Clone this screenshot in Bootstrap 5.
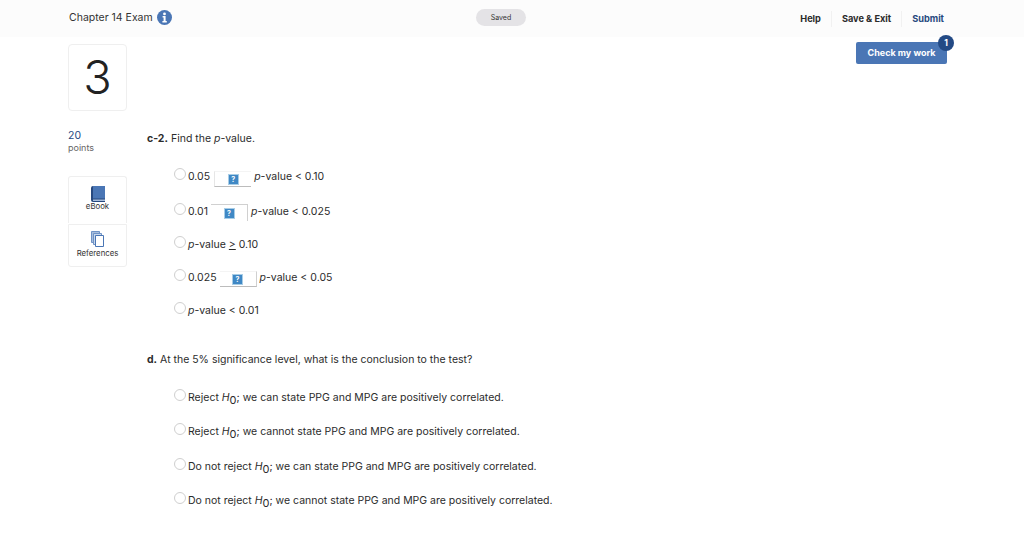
<!DOCTYPE html>
<html lang="en">
<head>
<meta charset="utf-8">
<title>Chapter 14 Exam</title>
<link rel="stylesheet" href="https://cdn.jsdelivr.net/npm/bootstrap@5.3.0/dist/css/bootstrap.min.css">
<style>
html,body{height:555px;overflow:hidden;background:#fff;}
body{font-family:"Inter","Liberation Sans",sans-serif;font-size:10.5px;color:#2b2b2b;line-height:14px;}
.topbar{height:37px;background:#fcfcfc;padding:0 80px 0 69px;}
.topbar-side{flex:1 1 0;}
.exam-title{font-size:10.5px;color:#333;}
.title-wrap{margin-top:-2px;}
.info-dot{width:15px;height:15px;margin-left:4px;}
.saved-pill{width:50px;height:17px;border-radius:9px;background:#e4e3e6;font-size:7px;color:#333;margin-right:11px;margin-top:-2px;}
.top-link{font-size:9.2px;font-weight:700;color:#2b2b2b;text-decoration:none;padding:0 10px;border-right:1px solid #f1f1f1;line-height:16px;}
.top-link:last-child{border-right:0;padding-right:0;color:#27497f;}
.page-area{padding:5px 77px 0 68px;}
.num-box{width:59px;height:67px;margin-top:2px;padding-bottom:2px;border:1px solid #efefef;border-radius:4px;font-size:47px;line-height:1;color:#222;font-weight:300;}
.check-btn{position:relative;width:91px;height:22px;background:#4a76b5;border:0;border-radius:2px;color:#fff;font-size:9px;font-weight:700;padding:0;}
.check-btn:hover{background:#4a76b5;color:#fff;}
.count-bubble{position:absolute;top:-7px;right:-7px;width:16px;height:16px;border-radius:50%;background:#234a85;color:#fff;font-size:8.5px;font-weight:700;line-height:16px;text-align:center;}
.q-row{margin-top:18px;}
.side-col{width:59px;flex:none;margin-right:20px;}
.pts-num{font-size:10.5px;color:#27497f;line-height:14px;}
.pts-lbl{font-size:9px;color:#666;line-height:12px;margin-top:-1px;}
.tool-box{border:1px solid #efefef;text-align:center;}
.tool-box svg{display:block;}
.first-tool{height:47px;margin-top:22px;border-bottom:0;border-radius:3px 3px 0 0;padding-top:9px;}
.second-tool{height:43px;border-radius:0 0 3px 3px;padding-top:6px;margin-top:1px;}
.tool-lbl{font-size:7.8px;color:#333;line-height:10px;margin-top:1px;}
.first-tool .tool-lbl{margin-top:-1px;}
.q-head{height:14px;}
.q-head-c{margin-top:3px;}
.opts-a{margin-top:24px;}
.opts-a .opt-line{height:33px;}
.opts-a .opt-line:first-child{height:35px;}
.q-head-d{margin-top:16px;}
.opts-b{margin-top:24px;}
.opts-b .opt-line{height:34.3px;}
.opt-line{margin-left:27px;white-space:nowrap;}
.radio-mark{width:12px;height:12px;border:1px solid #cfcfcf;border-radius:50%;flex:none;margin-right:2px;margin-top:-2px;background:#fff;}
.blank-box{width:37px;height:16px;margin:0 3px;background:#fff;}
.blank-a{margin-top:1px;margin-left:4px;border-left:1px solid #e6e6e6;border-bottom:1px solid #bcbcbc;border-top:1px solid #f4f4f4;}
.blank-b{height:17px;border-top:1px solid #d0d0d0;border-right:1px solid #d0d0d0;margin-top:-1px;}
.blank-c{border-bottom:1px solid #bcbcbc;border-right:1px solid #d0d0d0;border-top:1px solid #f4f4f4;}
.q-mark{width:11px;height:11px;background:#3f88c5;border:1px solid #a8cde6;color:#fff;font-size:7px;font-weight:700;line-height:9px;text-align:center;}
.h-sub{font-size:11px;position:relative;top:3px;line-height:0;}
.ge-mark{text-decoration:underline;}
</style>
</head>
<body>
<header class="topbar d-flex align-items-center">
  <div class="topbar-side title-wrap d-flex align-items-center">
    <span class="exam-title">Chapter 14 Exam</span>
    <svg class="info-dot" viewBox="0 0 15 15"><circle cx="7.5" cy="7.5" r="7.5" fill="#4a76b5"/><circle cx="7.5" cy="3.9" r="1.4" fill="#fff"/><path d="M5.6 6h3v5h1.2v1.4H5.4V11h1.2V7.4h-1z" fill="#fff"/></svg>
  </div>
  <div class="saved-pill d-flex align-items-center justify-content-center">Saved</div>
  <nav class="topbar-side d-flex justify-content-end">
    <a class="top-link" href="#">Help</a>
    <a class="top-link" href="#">Save &amp; Exit</a>
    <a class="top-link" href="#">Submit</a>
  </nav>
</header>
<main class="page-area">
  <div class="d-flex justify-content-between align-items-start">
    <div class="num-box d-flex align-items-center justify-content-center">3</div>
    <button class="check-btn btn" type="button">Check my work<span class="count-bubble">1</span></button>
  </div>
  <div class="q-row d-flex">
    <aside class="side-col">
      <div class="pts-num">20</div>
      <div class="pts-lbl">points</div>
      <div class="tool-box first-tool d-flex flex-column align-items-center">
        <svg width="14" height="16" viewBox="0 0 14 16"><path d="M2 0h12v13H2z" fill="#4a76b5"/><path d="M0 2a2 2 0 0 1 2-2v12.5h12V16H2a2 2 0 0 1-2-2z" fill="#27497f"/><path d="M2 13.5h12V15H2z" fill="#a9bedc"/></svg>
        <div class="tool-lbl">eBook</div>
      </div>
      <div class="tool-box second-tool d-flex flex-column align-items-center">
        <svg width="13" height="16" viewBox="0 0 13 16"><path d="M.5.5h8v11h-8z" fill="#a9bedc" stroke="#6f93c6"/><path d="M2.5 2.5h8v11h-8z" fill="#c9d8ec" stroke="#6f93c6"/><path d="M4.5 4.5h8v11h-8z" fill="#fff" stroke="#4a76b5"/></svg>
        <div class="tool-lbl">References</div>
      </div>
    </aside>
    <section class="flex-grow-1">
      <div class="q-head q-head-c"><b>c-2.</b> Find the <i>p</i>-value.</div>
      <div class="opts-a">
        <div class="opt-line d-flex align-items-start"><span class="radio-mark"></span>0.05<span class="blank-box blank-a d-flex align-items-center justify-content-center"><span class="q-mark">?</span></span><span><i>p</i>-value &lt; 0.10</span></div>
        <div class="opt-line d-flex align-items-start"><span class="radio-mark"></span>0.01<span class="blank-box blank-b d-flex align-items-center justify-content-center"><span class="q-mark">?</span></span><span><i>p</i>-value &lt; 0.025</span></div>
        <div class="opt-line d-flex align-items-start"><span class="radio-mark"></span><span><i>p</i>-value <span class="ge-mark">&gt;</span> 0.10</span></div>
        <div class="opt-line d-flex align-items-start"><span class="radio-mark"></span>0.025<span class="blank-box blank-c d-flex align-items-center justify-content-center"><span class="q-mark">?</span></span><span><i>p</i>-value &lt; 0.05</span></div>
        <div class="opt-line d-flex align-items-start"><span class="radio-mark"></span><span><i>p</i>-value &lt; 0.01</span></div>
      </div>
      <div class="q-head q-head-d"><b>d.</b> At the 5% significance level, what is the conclusion to the test?</div>
      <div class="opts-b">
        <div class="opt-line d-flex align-items-start"><span class="radio-mark"></span><span>Reject <i>H</i><span class="h-sub">0</span>; we can state PPG and MPG are positively correlated.</span></div>
        <div class="opt-line d-flex align-items-start"><span class="radio-mark"></span><span>Reject <i>H</i><span class="h-sub">0</span>; we cannot state PPG and MPG are positively correlated.</span></div>
        <div class="opt-line d-flex align-items-start"><span class="radio-mark"></span><span>Do not reject <i>H</i><span class="h-sub">0</span>; we can state PPG and MPG are positively correlated.</span></div>
        <div class="opt-line d-flex align-items-start"><span class="radio-mark"></span><span>Do not reject <i>H</i><span class="h-sub">0</span>; we cannot state PPG and MPG are positively correlated.</span></div>
      </div>
    </section>
  </div>
</main>
<script src="https://cdn.jsdelivr.net/npm/bootstrap@5.3.0/dist/js/bootstrap.bundle.min.js"></script>
</body>
</html>
